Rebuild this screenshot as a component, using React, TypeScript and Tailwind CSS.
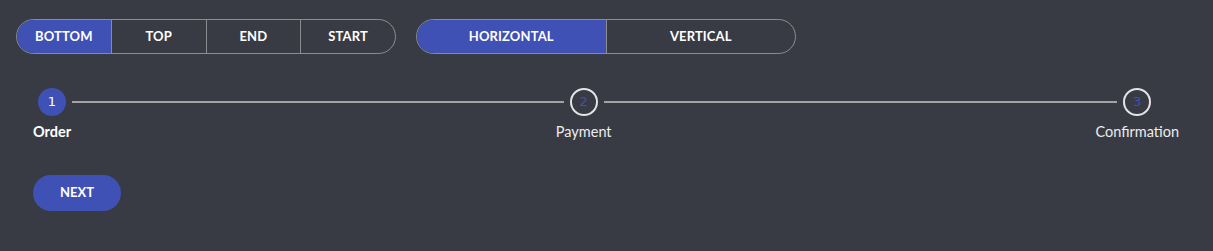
import { useState } from "react";

const positions = ["Bottom", "Top", "End", "Start"];
const orientations = ["Horizontal", "Vertical"];
const steps = ["Order", "Payment", "Confirmation"];

function Segmented({
  items,
  value,
  onChange,
}: {
  items: string[];
  value: string;
  onChange: (v: string) => void;
}) {
  return (
    <div className="flex h-[35px] w-[380px] overflow-hidden rounded-full border border-[#8c8c90]">
      {items.map((it, i) => (
        <button
          key={it}
          onClick={() => onChange(it)}
          className={`flex flex-1 items-center justify-center text-[13px] font-bold uppercase tracking-[0.01em] text-white ${
            i > 0 ? "border-l border-[#8c8c90]" : ""
          } ${value === it ? "bg-[#3f51b5]" : "bg-transparent"}`}
        >
          {it}
        </button>
      ))}
    </div>
  );
}

export default function App() {
  const [pos, setPos] = useState("Bottom");
  const [orient, setOrient] = useState("Horizontal");
  const [active, setActive] = useState(0);

  return (
    <div
      className="h-[251px] w-full bg-[#393b44] text-white"
      style={{ fontFamily: "Lato, 'Noto Sans', sans-serif" }}
    >
      <div className="flex gap-5 px-4 pt-[19px]">
        <Segmented items={positions} value={pos} onChange={setPos} />
        <Segmented items={orientations} value={orient} onChange={setOrient} />
      </div>

      <div className="mt-[34px] flex items-start pl-[32px] pr-[34px]">
        {steps.map((s, i) => (
          <div key={s} className="contents">
            {i > 0 && <div className="mt-[13px] h-[2px] flex-1 bg-[#a3a3a6]" />}
            <div className="flex flex-col items-stretch">
              <div className="flex items-center">
                <div className={`h-[2px] flex-1 ${i > 0 ? "bg-[#a3a3a6]" : ""}`} />
                <div
                  className={`mx-[6px] flex h-7 w-7 shrink-0 items-center justify-center rounded-full text-[13px] ${
                    i === active
                      ? "bg-[#3f51b5] text-white"
                      : "border-2 border-[#e4e4e6] text-[#3f51b5]"
                  }`}
                  style={{ fontFamily: "'DejaVu Sans', sans-serif" }}
                >
                  {i + 1}
                </div>
                <div className={`h-[2px] flex-1 ${i < steps.length - 1 ? "bg-[#a3a3a6]" : ""}`} />
              </div>
              <span
                className={`mt-[5px] whitespace-nowrap text-center text-[14.5px] ${
                  i === active ? "font-bold text-white" : "text-[#ececee]"
                }`}
              >
                {s}
              </span>
            </div>
          </div>
        ))}
      </div>

      <div className="mt-[32px] pl-[33px]">
        <button
          onClick={() => setActive((a) => (a + 1) % steps.length)}
          className="flex h-9 w-[88px] items-center justify-center rounded-full bg-[#3f51b5] text-[13px] font-bold uppercase text-white"
        >
          Next
        </button>
      </div>
    </div>
  );
}
